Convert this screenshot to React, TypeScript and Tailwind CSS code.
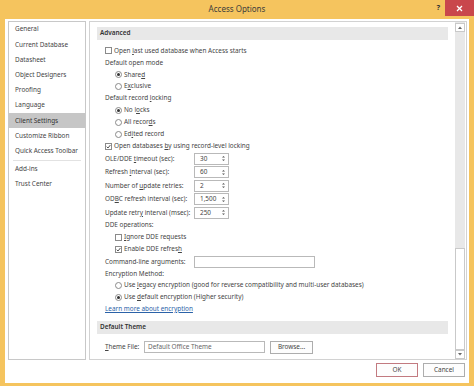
import React from "react";

const navItems = [
  "General",
  "Current Database",
  "Datasheet",
  "Object Designers",
  "Proofing",
  "Language",
  "Client Settings",
  "Customize Ribbon",
  "Quick Access Toolbar",
];

const font = { fontFamily: '"Segoe UI", "Noto Sans", "Open Sans", sans-serif' };

function U({ children }: { children: React.ReactNode }) {
  return <span className="underline underline-offset-[1px]">{children}</span>;
}

function Check({ checked }: { checked?: boolean }) {
  return (
    <span className="w-[7px] h-[7px] border border-[#8a8a8a] bg-white flex items-center justify-center shrink-0">
      {checked && (
        <svg width="5" height="5" viewBox="0 0 6 6">
          <path d="M0.8 3.2 L2.4 4.8 L5.3 1.2" fill="none" stroke="#333" strokeWidth="1" />
        </svg>
      )}
    </span>
  );
}

function Radio({ checked }: { checked?: boolean }) {
  return (
    <span className="w-[7px] h-[7px] rounded-full border border-[#8a8a8a] bg-white flex items-center justify-center shrink-0">
      {checked && <span className="w-[3px] h-[3px] rounded-full bg-[#333]" />}
    </span>
  );
}

function Spin() {
  return (
    <svg width="3" height="7" viewBox="0 0 3 7">
      <path d="M0 2.5 L1.5 1 L3 2.5 Z" fill="#555" />
      <path d="M0 4.5 L1.5 6 L3 4.5 Z" fill="#555" />
    </svg>
  );
}

function NumberRow({ label, value }: { label: React.ReactNode; value: string }) {
  return (
    <div className="flex items-center h-[13.5px] pl-[8px]">
      <span className="w-[89px] whitespace-nowrap">{label}</span>
      <div className="w-[35px] h-[12px] border border-[#b9b9b9] flex items-center justify-between pl-[5px] pr-[3px]">
        <span>{value}</span>
        <Spin />
      </div>
    </div>
  );
}

export default function App() {
  return (
    <div
      className="w-[474px] h-[386px] bg-[#f5c45e] flex flex-col text-[#444] text-[6.4px] leading-none overflow-hidden whitespace-nowrap"
      style={font}
    >
      {/* Title bar */}
      <div className="h-[19px] shrink-0 grid grid-cols-[1fr_auto_1fr]">
        <div />
        <div className="text-[8px] text-[#3c3c3c] pt-[5px]">Access Options</div>
        <div className="flex justify-end items-start">
          <span className="text-[7.5px] font-bold text-[#333] pt-[4px] mr-[5px]">?</span>
          <div className="w-[29px] h-[16px] bg-[#c9474c] flex items-center justify-center">
            <svg width="7" height="7" viewBox="0 0 7 7">
              <path d="M1 1 L6 6 M6 1 L1 6" stroke="#fff" strokeWidth="1.3" />
            </svg>
          </div>
        </div>
      </div>

      {/* Body */}
      <div className="flex-1 mx-[5px] mb-[3px] bg-white flex flex-col pl-[3px] pr-[2px] pt-[2px]">
        <div className="flex gap-[3px] h-[339px]">
          {/* Sidebar */}
          <div className="w-[78px] border border-[#c8c8c8] flex flex-col">
            {navItems.map((item) => (
              <div
                key={item}
                className={`h-[15.2px] flex items-center pl-[6px] ${
                  item === "Client Settings" ? "bg-[#c6c6c6] text-[#333]" : ""
                }`}
              >
                {item}
              </div>
            ))}
            <div className="h-px bg-[#e2e2e2] mx-[4px] my-[1px]" />
            <div className="h-[15.2px] flex items-center pl-[6px]">Add-ins</div>
            <div className="h-[15.2px] flex items-center pl-[6px]">Trust Center</div>
          </div>

          {/* Main panel */}
          <div className="flex-1 border border-[#d2d2d2] flex">
            <div className="flex-1 flex flex-col pt-[5px] pl-[7px] pr-[7px]">
              <div className="h-[13px] bg-[#e8e8e8] flex items-center pl-[3px] font-semibold text-[#333]">
                Advanced
              </div>

              <div className="flex flex-col mt-[5px]">
                <div className="h-[11.9px] flex items-center gap-[2px] pl-[8px]">
                  <Check />
                  <span>
                    Open <U>l</U>ast used database when Access starts
                  </span>
                </div>
                <div className="h-[11.9px] flex items-center pl-[8px]">Default open mode</div>
                <div className="h-[11.9px] flex items-center gap-[2px] pl-[18px]">
                  <Radio checked />
                  <span>
                    Share<U>d</U>
                  </span>
                </div>
                <div className="h-[11.9px] flex items-center gap-[2px] pl-[18px]">
                  <Radio />
                  <span>
                    E<U>x</U>clusive
                  </span>
                </div>
                <div className="h-[11.9px] flex items-center pl-[8px]">
                  <span>
                    Default record <U>l</U>ocking
                  </span>
                </div>
                <div className="h-[11.9px] flex items-center gap-[2px] pl-[18px]">
                  <Radio checked />
                  <span>
                    No l<U>o</U>cks
                  </span>
                </div>
                <div className="h-[11.9px] flex items-center gap-[2px] pl-[18px]">
                  <Radio />
                  <span>
                    All recor<U>d</U>s
                  </span>
                </div>
                <div className="h-[11.9px] flex items-center gap-[2px] pl-[18px]">
                  <Radio />
                  <span>
                    Ed<U>i</U>ted record
                  </span>
                </div>
                <div className="h-[11.9px] flex items-center gap-[2px] pl-[8px]">
                  <Check checked />
                  <span>
                    Open databases <U>b</U>y using record-level locking
                  </span>
                </div>

                <NumberRow label={<>OLE/DDE <U>t</U>imeout (sec):</>} value="30" />
                <NumberRow label={<>Refresh <U>i</U>nterval (sec):</>} value="60" />
                <NumberRow label={<>Number of <U>u</U>pdate retries:</>} value="2" />
                <NumberRow label={<>OD<U>B</U>C refresh interval (sec):</>} value="1,500" />
                <NumberRow label={<>Update retr<U>y</U> interval (msec):</>} value="250" />

                <div className="h-[11.9px] flex items-center pl-[8px]">DDE operations:</div>
                <div className="h-[11.9px] flex items-center gap-[2px] pl-[18px]">
                  <Check />
                  <span>
                    <U>I</U>gnore DDE requests
                  </span>
                </div>
                <div className="h-[11.9px] flex items-center gap-[2px] pl-[18px]">
                  <Check checked />
                  <span>
                    Enable DDE refres<U>h</U>
                  </span>
                </div>
                <div className="h-[13.5px] flex items-center pl-[8px]">
                  <span className="w-[89px]">Command-line arguments:</span>
                  <div className="w-[121px] h-[12px] border border-[#b9b9b9]" />
                </div>
                <div className="h-[10.5px] flex items-center pl-[8px]">Encryption Method:</div>
                <div className="h-[11.9px] flex items-center gap-[2px] pl-[18px]">
                  <Radio />
                  <span>
                    Use <U>l</U>egacy encryption (good for reverse compatibility and multi-user databases)
                  </span>
                </div>
                <div className="h-[11.9px] flex items-center gap-[2px] pl-[18px]">
                  <Radio checked />
                  <span>
                    Use <U>d</U>efault encryption (Higher security)
                  </span>
                </div>
                <div className="h-[11.9px] flex items-center pl-[8px]">
                  <span className="text-[#2b62a8] underline underline-offset-[1px]">
                    Learn more about encryption
                  </span>
                </div>
              </div>

              <div className="h-[13px] mt-[6px] bg-[#e8e8e8] flex items-center pl-[3px] font-semibold text-[#333]">
                Default Theme
              </div>
              <div className="flex items-center pl-[8px] mt-[7px]">
                <span className="w-[39px]">
                  <U>T</U>heme File:
                </span>
                <div className="w-[121px] h-[12px] border border-[#b9b9b9] flex items-center pl-[3px] text-[#666]">
                  Default Office Theme
                </div>
                <div className="ml-[5px] w-[43px] h-[13px] border border-[#adadad] bg-[#fdfdfd] flex items-center justify-center">
                  Browse...
                </div>
              </div>
            </div>

            {/* Scrollbar */}
            <div className="w-[10px] flex flex-col bg-[#e8e8e8] mr-px">
              <div className="h-[9px] mt-px bg-white border border-[#c9c9c9] flex items-center justify-center">
                <svg width="4" height="3" viewBox="0 0 4 3">
                  <path d="M0 3 L2 0.5 L4 3 Z" fill="#666" />
                </svg>
              </div>
              <div className="flex-1" />
              <div className="h-[102px] bg-white border border-[#c9c9c9]" />
              <div className="h-[9px] bg-white border border-[#c9c9c9] flex items-center justify-center">
                <svg width="4" height="3" viewBox="0 0 4 3">
                  <path d="M0 0 L2 2.5 L4 0 Z" fill="#666" />
                </svg>
              </div>
            </div>
          </div>
        </div>

        {/* Footer buttons */}
        <div className="flex justify-end gap-[5px] pt-[3px] pr-[2px]">
          <div className="w-[42px] h-[14px] border border-[#c27a80] bg-[#fdfdfd] flex items-center justify-center">
            OK
          </div>
          <div className="w-[42px] h-[14px] border border-[#adadad] bg-[#fdfdfd] flex items-center justify-center">
            Cancel
          </div>
        </div>
      </div>
    </div>
  );
}
